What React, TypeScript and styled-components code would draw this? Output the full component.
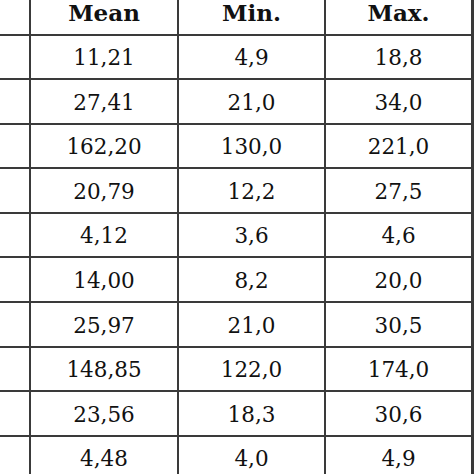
import React from "react";
import styled, { createGlobalStyle } from "styled-components";

const Global = createGlobalStyle`
  html, body { margin: 0; padding: 0; background: #ffffff; overflow: hidden; }
  #root { width: 474px; height: 474px; overflow: hidden; }
`;

const Grid = styled.div`
  display: grid;
  grid-template-columns: 29px 146px 145px 145px;
  grid-template-rows: 33.5px;
  grid-auto-rows: 42.6px;
  gap: 2px;
  padding-right: 3px;
  background: #3a3a3a;
  width: 474px;
  box-sizing: border-box;
  font-family: "DejaVu Serif", "Liberation Serif", serif;
  color: #111111;
`;

const Cell = styled.div<{ $head?: boolean }>`
  background: #ffffff;
  display: flex;
  align-items: center;
  justify-content: center;
  font-size: ${(p) => (p.$head ? "23px" : "21.5px")};
  font-weight: ${(p) => (p.$head ? 700 : 400)};
  padding-bottom: ${(p) => (p.$head ? "9px" : "0")};
  padding-top: ${(p) => (p.$head ? "0" : "2px")};
  box-sizing: border-box;
  line-height: 1;
`;

const rows: string[][] = [
  ["11,21", "4,9", "18,8"],
  ["27,41", "21,0", "34,0"],
  ["162,20", "130,0", "221,0"],
  ["20,79", "12,2", "27,5"],
  ["4,12", "3,6", "4,6"],
  ["14,00", "8,2", "20,0"],
  ["25,97", "21,0", "30,5"],
  ["148,85", "122,0", "174,0"],
  ["23,56", "18,3", "30,6"],
  ["4,48", "4,0", "4,9"],
];

export default function App() {
  return (
    <>
      <Global />
      <Grid>
        <Cell $head />
        <Cell $head>Mean</Cell>
        <Cell $head>Min.</Cell>
        <Cell $head>Max.</Cell>
        {rows.map((r, i) => (
          <React.Fragment key={i}>
            <Cell />
            {r.map((v, j) => (
              <Cell key={j}>{v}</Cell>
            ))}
          </React.Fragment>
        ))}
      </Grid>
    </>
  );
}
